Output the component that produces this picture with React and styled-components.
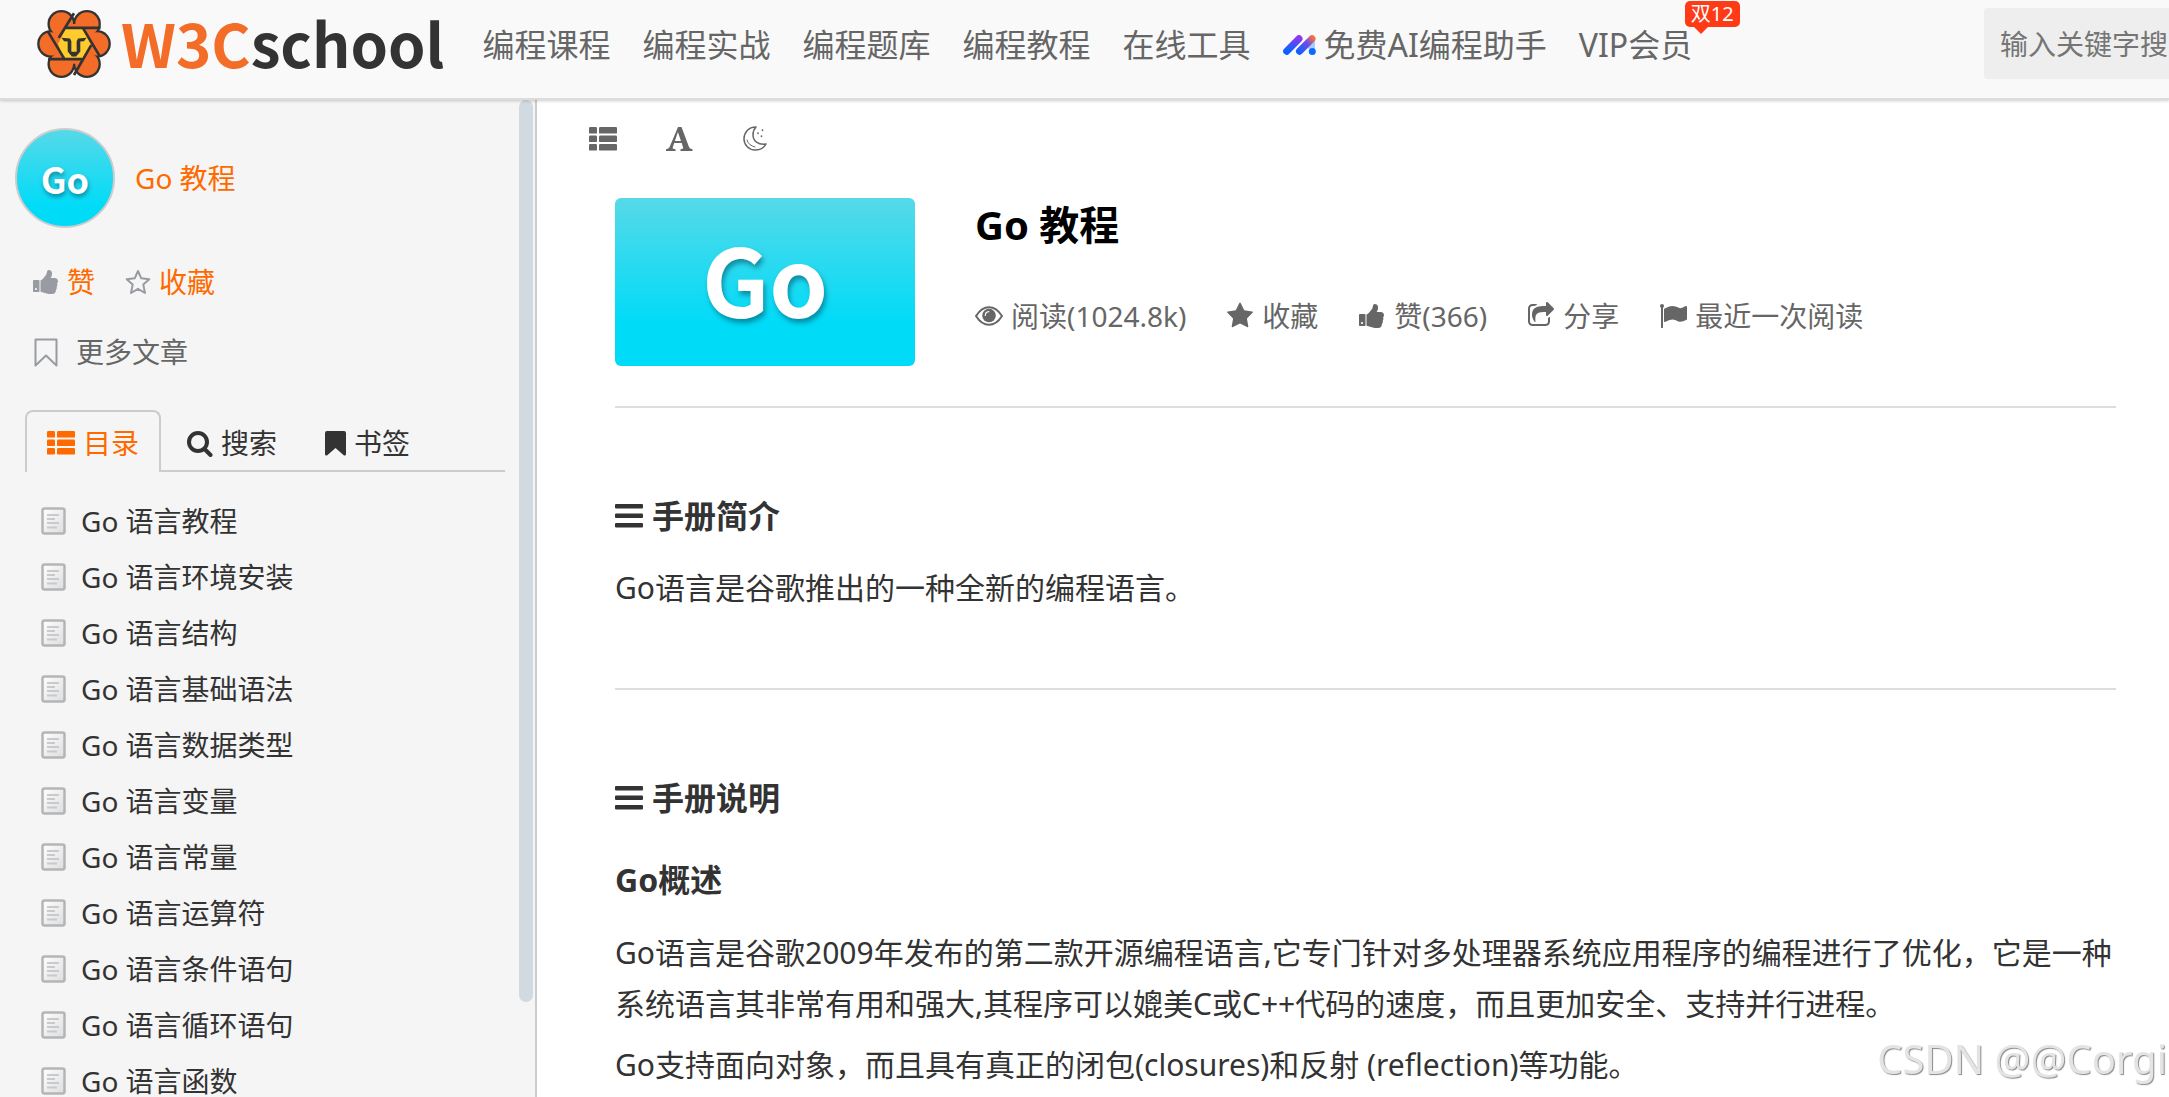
import React from "react";
import styled, { createGlobalStyle } from "styled-components";

const GlobalStyle = createGlobalStyle`
  * { box-sizing: border-box; }
  body {
    margin: 0;
    background: #fff;
    color: #333;
    font-family: "Noto Sans", "Noto Sans CJK SC", sans-serif;
    font-size: 28px;
    line-height: 40px;
  }
  a { color: inherit; text-decoration: none; }
  button {
    margin: 0;
    padding: 0;
    border: 0;
    background: none;
    color: inherit;
    font: inherit;
    cursor: pointer;
  }
  h1, h2, h3, p, ul { margin: 0; padding: 0; }
  svg { display: block; flex: none; }
`;

const Page = styled.div`
  display: flex;
  flex-direction: column;
  height: 100vh;
  overflow: hidden;
`;

/* ---------- header ---------- */

const Header = styled.header`
  position: relative;
  z-index: 2;
  display: flex;
  align-items: flex-start;
  flex: none;
  height: 100px;
  padding: 8px 0 0 37px;
  background: #f9f9f9;
  border-bottom: 2px solid #dcdcdc;
  box-shadow: 0 1px 3px rgba(0, 0, 0, 0.2);
`;

const Logo = styled.a`
  display: flex;
  align-items: center;
  gap: 10px;
  height: 72px;
  color: #333;
  font-family: "Noto Sans CJK SC", sans-serif;
  font-size: 60px;
  font-weight: 700;
  line-height: 68px;
`;

const LogoText = styled.span`
  padding-bottom: 4px;
`;

const LogoAccent = styled.span`
  color: #f36c28;
`;

const Nav = styled.nav`
  display: flex;
  align-items: center;
  gap: 32px;
  height: 74px;
  margin-left: 38px;
  color: #666;
  font-size: 32px;
  white-space: nowrap;
`;

const NavLink = styled.a`
  position: relative;
  display: flex;
  align-items: center;
  gap: 8px;
`;

const Badge = styled.span`
  position: absolute;
  left: 106px;
  top: -24px;
  padding: 0 6px;
  border-radius: 5px;
  background: #ff3a17;
  color: #fff;
  font-size: 20px;
  line-height: 26px;

  &::after {
    content: "";
    position: absolute;
    left: 9px;
    top: 26px;
    border: 7px solid transparent;
    border-top-color: #ff3a17;
    border-bottom: 0;
  }
`;

const SearchForm = styled.form`
  flex: none;
  width: 185px;
  margin-left: auto;
`;

const SearchInput = styled.input`
  display: block;
  width: 100%;
  height: 71px;
  padding: 0 0 0 16px;
  border: 0;
  border-radius: 4px 0 0 4px;
  background: #eee;
  color: #333;
  font: inherit;

  &::placeholder { color: #757575; opacity: 1; }
`;

/* ---------- sidebar ---------- */

const Body = styled.div`
  display: flex;
  flex: 1;
  min-height: 0;
`;

const Sidebar = styled.aside`
  display: flex;
  flex: none;
  width: 537px;
  padding-right: 2px;
  background: #f5f5f5;
  border-right: 2px solid #ccc;
  overflow: hidden;
`;

const SidebarContent = styled.div`
  flex: 1;
  padding: 28px 14px 0 15px;
`;

const ScrollThumb = styled.div`
  width: 14px;
  height: 902px;
  border-radius: 7px;
  background: #d1d9e1;
`;

const Course = styled.a`
  display: flex;
  align-items: center;
  gap: 20px;
  color: #ff6a00;
`;

const Avatar = styled.span`
  display: flex;
  align-items: center;
  justify-content: center;
  width: 100px;
  height: 100px;
  border: 2px solid #ccc;
  border-radius: 50%;
  background: linear-gradient(#56d9e8, #00dbf8 80%);
  color: #fff;
  font-family: "Noto Sans CJK SC", sans-serif;
  font-size: 36px;
  font-weight: 700;
  text-shadow: 1px 3px 4px rgba(0, 90, 110, 0.6);
`;

const Actions = styled.div`
  display: flex;
  gap: 30px;
  margin-top: 34px;
  padding-left: 17px;
`;

const Action = styled.button`
  display: flex;
  align-items: center;
  gap: ${(p) => p.$gap || 8}px;
  color: ${(p) => (p.$plain ? "#666" : "#ff6a00")};

  svg { color: #999ba3; }
`;

const MoreRow = styled.div`
  margin-top: 30px;
  padding-left: 19px;
`;

const Tabs = styled.div`
  display: flex;
  gap: 4px;
  height: 62px;
  margin: 38px 0 21px 10px;
  box-shadow: inset 0 -2px #ccc;
`;

const Tab = styled.button`
  display: flex;
  align-items: center;
  gap: 8px;
  padding: 2px 20px 0;
  border: 2px solid ${(p) => (p.$active ? "#ccc" : "transparent")};
  border-bottom: 0;
  border-radius: 8px 8px 0 0;
  background: ${(p) => (p.$active ? "#f5f5f5" : "none")};
  color: ${(p) => (p.$active ? "#ff6a00" : "#333")};
`;

const Chapters = styled.ul`
  padding-left: 26px;
  list-style: none;
`;

const Chapter = styled.a`
  display: flex;
  align-items: center;
  gap: 14px;
  height: 56px;
  line-height: 28px;
  white-space: nowrap;
`;

/* ---------- main ---------- */

const Main = styled.main`
  flex: 1;
  min-width: 0;
  padding: 26px 53px 0 78px;
  overflow: hidden;
`;

const Toolbar = styled.div`
  display: flex;
  align-items: center;
  gap: 49px;
  height: 25px;
  margin-left: -26px;
  color: #666;
`;

const Intro = styled.section`
  display: flex;
  gap: 60px;
  padding: 47px 0 40px;
  border-bottom: 2px solid #ddd;
`;

const Cover = styled.div`
  display: flex;
  align-items: center;
  justify-content: center;
  flex: none;
  width: 300px;
  height: 168px;
  padding-bottom: 10px;
  border-radius: 6px;
  background: linear-gradient(#56d9e8, #00dbf8 75%);
  color: #fff;
  font-family: "Noto Sans CJK SC", sans-serif;
  font-size: 94px;
  font-weight: 700;
  line-height: 140px;
  text-shadow: 2px 4px 5px rgba(0, 90, 110, 0.6);
`;

const Title = styled.h1`
  color: #000;
  font-size: 40px;
  line-height: 54px;
`;

const Meta = styled.div`
  display: flex;
  gap: 40px;
  margin-top: 44px;
  color: #666;
  white-space: nowrap;
`;

const MetaItem = styled.button`
  display: flex;
  align-items: center;
  gap: 8px;
`;

const Section = styled.section`
  padding: 84px 0 75px;
  border-bottom: 2px solid #ddd;
`;

const Heading = styled.h2`
  display: flex;
  align-items: center;
  gap: 9px;
  font-size: 32px;
  line-height: 48px;
`;

const SubHeading = styled.h3`
  margin: 34px 0 23px;
  font-size: 32px;
  line-height: 48px;
`;

const Paragraph = styled.p`
  margin-top: 10px;
  font-size: 30px;
  line-height: 51px;
`;

const FirstParagraph = styled(Paragraph)`
  margin-top: 22px;
`;

const Watermark = styled.div`
  position: fixed;
  right: 2px;
  bottom: 14px;
  color: #e4e4e4;
  font-size: 40px;
  line-height: 48px;
  text-shadow: 1px 1px 1px #888;
`;

/* ---------- icons ---------- */

const Glyph = ({ d, size = 28 }) => (
  <svg width={size} height={size} viewBox="0 0 1792 1792" fill="currentColor" aria-hidden="true">
    <path d={d} />
  </svg>
);

const THUMB =
  "M320 1344q0-26-19-45t-45-19q-27 0-45.5 19t-18.5 45q0 27 18.5 45.5t45.5 18.5q26 0 45-18.5t19-45.5zm160-512v640q0 26-19 45t-45 19h-288q-26 0-45-19t-19-45v-640q0-26 19-45t45-19h288q26 0 45 19t19 45zm1184 0q0 86-55 149 15 44 15 76 3 76-43 137 17 56 0 117-15 57-54 94 9 112-49 181-64 76-197 78h-129q-66 0-144-15.500t-121.500-29-120.500-39.500q-123-43-158-44-26-1-45-19.500t-19-44.500v-641q0-25 18-43.500t43-20.500q24-2 76-59t101-121q68-87 101-120 18-18 31-48t17.500-48.500 13.500-60.500q7-39 12.500-61t19.500-52 34-50q19-19 45-19 46 0 82.500 10.500t60 26 40 40.500 24 45 12 50 5 45 .5 39q0 38-9.500 76t-19 60-27.500 56q-3 6-10 18t-11 22-8 24h277q78 0 135 57t57 135z";
const STAR =
  "M1728 647q0 22-26 48l-363 354 86 500q1 7 1 20 0 21-10.500 35.500t-30.500 14.500q-19 0-40-12l-449-236-449 236q-22 12-40 12-21 0-31.500-14.500t-10.500-35.500q0-6 2-20l86-500-364-354q-25-27-25-48 0-37 56-46l502-73 225-455q19-41 49-41t49 41l225 455 502 73q56 9 56 46z";
const FLAG =
  "M320 256q0 72-64 110v1266q0 13-9.500 22.500t-22.500 9.500h-64q-13 0-22.500-9.500t-9.500-22.500v-1266q-64-38-64-110 0-53 37.500-90.500t90.500-37.500 90.500 37.500 37.500 90.500zm1472 64v763q0 25-12.500 38.500t-39.500 27.500q-215 116-369 116-61 0-123.500-22t-108.500-48-115.500-48-142.500-22q-192 0-464 146-17 9-33 9-26 0-45-19t-19-45v-742q0-32 31-55 21-14 79-43 236-120 421-120 107 0 200 29t219 88q38 19 88 19 54 0 117.500-21t110-47 88-47 54.500-21q26 0 45 19t19 45z";
const SHARE =
  "M1472 989v259q0 119-84.500 203.500t-203.500 84.500h-832q-119 0-203.500-84.500t-84.500-203.500v-832q0-119 84.500-203.500t203.500-84.500h255q13 0 22.500 9.500t9.500 22.500q0 27-26 32-77 26-133 60-10 4-16 4h-112q-66 0-113 47t-47 113v832q0 66 47 113t113 47h832q66 0 113-47t47-113v-214q0-19 18-29 28-13 54-37 16-16 35-8 21 9 21 29zm237-496l-384 384q-18 19-45 19-12 0-25-5-39-17-39-59v-192h-160q-323 0-438 131-119 137-74 473 3 23-20 34-8 2-12 2-16 0-26-13-10-14-21-31t-39.500-68.500-49.500-99.500-38.500-114-17.500-122q0-49 3.500-91t14-90 28-88 47-81.500 68.500-74 94.500-61.500 124.500-48.500 159.500-30.500 196.500-11h160v-192q0-42 39-59 13-5 25-5 26 0 45 19l384 384q19 19 19 45t-19 45z";

const ListIcon = ({ size = 28 }) => (
  <svg width={size} height={(size * 24) / 28} viewBox="0 0 28 24" fill="currentColor" aria-hidden="true">
    {[0, 8.5, 17].map((y) => (
      <g key={y}>
        <rect y={y} width="8" height="6.600" rx="1.200" />
        <rect x="10" y={y} width="18" height="6.600" rx="1.200" />
      </g>
    ))}
  </svg>
);

const PETALS = [[94, 66], [171, 66], [201, 126], [171, 187], [94, 187], [63, 126]];

const LionIcon = () => (
  <svg width="74" height="68" viewBox="21 24 222 205" aria-hidden="true">
    <g fill="#333">
      {PETALS.map(([x, y]) => (
        <circle key={`${x}-${y}`} cx={x} cy={y} r="42" />
      ))}
    </g>
    <g fill="#f36c28">
      {PETALS.map(([x, y]) => (
        <circle key={`${x}-${y}`} cx={x} cy={y} r="35" />
      ))}
      <path d="M98 66h70l30 60-30 60H98L66 126z" />
    </g>
    <path d="M108 80h50l24 48-25 44h-56L84 126z" fill="#ffcb2d" />
    <path d="M132 34L86 108M106 78h106M160 80l50 84M184 130l-52 90M54 172h102M54 90l48 80" fill="none" stroke="#333" strokeWidth="8" />
    <path d="M94 108l26 2 4 8v32h16v-32l4-8 26-2-8 10-11 1v30l-8 10-11 6-11-6-8-10v-30l-11-1zM118 152h28l-7 12h-14z" fill="#333" />
  </svg>
);

const AiIcon = () => (
  <svg width="33" height="20" viewBox="0 0 33 20" aria-hidden="true">
    <defs>
      <linearGradient id="aiStroke" x1="0" y1="1" x2="0" y2="0">
        <stop offset="0" stopColor="#0a62ff" />
        <stop offset=".5" stopColor="#4052fb" />
        <stop offset="1" stopColor="#8a38ee" />
      </linearGradient>
      <linearGradient id="aiWarm" gradientUnits="userSpaceOnUse" x1="16" y1="17" x2="30" y2="3">
        <stop offset="0" stopColor="#1460ff" />
        <stop offset=".6" stopColor="#6b4de8" />
        <stop offset="1" stopColor="#f0704a" />
      </linearGradient>
    </defs>
    <path d="M32 4v12l-8-3z" fill="#a9ccff" />
    <path d="M3.700 16.300L16 3.700" stroke="url(#aiStroke)" strokeWidth="7" strokeLinecap="round" />
    <path d="M16.500 16.300L29 3.700" stroke="url(#aiWarm)" strokeWidth="7" strokeLinecap="round" />
    <circle cx="29.300" cy="16.500" r="3.500" fill="#0a6cff" />
  </svg>
);

const BookmarkOutline = () => (
  <svg width="24" height="29" viewBox="0 0 24 29" fill="none" stroke="currentColor" strokeWidth="2" strokeLinejoin="round" aria-hidden="true">
    <path d="M1.500 1.500h21v26L12 17.500 1.500 27.500z" />
  </svg>
);

const BookmarkSolid = () => (
  <svg width="21" height="25" viewBox="0 0 21 25" fill="currentColor" aria-hidden="true">
    <path d="M2 0h17q2 0 2 2v21q0 2-2 1.500L10.500 17 2 24.500Q0 25 0 23V2q0-2 2-2z" />
  </svg>
);

const StarOutline = () => (
  <svg width="26" height="26" viewBox="0 0 26 26" fill="none" stroke="currentColor" strokeWidth="2" strokeLinejoin="round" aria-hidden="true">
    <path d="M13 2l3.300 7.300 8 .9-6 5.400 1.700 8.400-7-4.200L6 24l1.700-8.400-6-5.400 8-.9z" />
  </svg>
);

const SearchIcon = () => (
  <svg width="26" height="27" viewBox="0 0 26 27" fill="none" stroke="currentColor" strokeWidth="4" strokeLinecap="round" aria-hidden="true">
    <circle cx="11" cy="12" r="9" />
    <path d="M17.500 19l6 6" />
  </svg>
);

const PageIcon = () => (
  <svg width="26" height="28" viewBox="0 0 26 28" aria-hidden="true">
    <defs>
      <linearGradient id="sheet" x1="0" y1="0" x2="1" y2="1">
        <stop offset="0" stopColor="#fff" />
        <stop offset="1" stopColor="#dcdddf" />
      </linearGradient>
    </defs>
    <rect x="1.500" y="1.500" width="22" height="25" rx="2" fill="url(#sheet)" stroke="#b4b5b7" strokeWidth="2.500" />
    <path d="M6 8h12M6 12h8M6 16h12M6 20.500h10" stroke="#cacaca" strokeWidth="2" />
  </svg>
);

const FontIcon = () => (
  <svg width="28" height="24" viewBox="0 0 28 24" fill="currentColor" aria-hidden="true">
    <path d="M12 0h3.500l7.500 20q.5 2 3.500 2.200V24H14.500v-1.800q3-.2 2.600-1.700L15.700 16H8.200l-1.500 4.500q-.3 1.500 2.800 1.700V24H0v-1.800q2.800-.3 3.600-2.200zM8.900 14h6.100L11.900 5z" />
  </svg>
);

const MoonIcon = () => (
  <svg width="24" height="25" viewBox="0 0 24 25" fill="none" stroke="currentColor" strokeWidth="1.500" strokeLinecap="round" strokeLinejoin="round" aria-hidden="true">
    <path d="M13 1C5 1 1 7 1 13c0 6 5 11 11 11 5 0 9-2 11-6-8 1-13-3-13-9 0-3 1-6 3-8z" />
    <path d="M4 14c1 4 4 6 8 7" strokeWidth="1" />
    <path d="M15 7v.3M19.500 4v.3M18.500 10v.3" strokeWidth="1.700" />
  </svg>
);

const EyeIcon = () => (
  <svg width="28" height="20" viewBox="0 0 28 20" fill="none" aria-hidden="true">
    <path d="M1 10Q6.500 1.200 14 1.200T27 10q-5.500 8.800-13 8.800T1 10z" stroke="currentColor" strokeWidth="2" />
    <circle cx="14" cy="9.500" r="6.800" fill="currentColor" />
    <path d="M10.300 9.500q0-3.500 3.500-3.900" stroke="#fff" strokeWidth="1.200" strokeLinecap="round" />
  </svg>
);

const BarsIcon = () => (
  <svg width="28" height="24" viewBox="0 0 28 24" fill="currentColor" aria-hidden="true">
    <rect y="0" width="28" height="4.500" rx="1" />
    <rect y="9.500" width="28" height="4.500" rx="1" />
    <rect y="19" width="28" height="4.500" rx="1" />
  </svg>
);

/* ---------- data ---------- */

const NAV = ["编程课程", "编程实战", "编程题库", "编程教程", "在线工具"];

const CHAPTERS = [
  "Go 语言教程",
  "Go 语言环境安装",
  "Go 语言结构",
  "Go 语言基础语法",
  "Go 语言数据类型",
  "Go 语言变量",
  "Go 语言常量",
  "Go 语言运算符",
  "Go 语言条件语句",
  "Go 语言循环语句",
  "Go 语言函数",
];

const TABS = [
  { label: "目录", icon: <ListIcon /> },
  { label: "搜索", icon: <SearchIcon /> },
  { label: "书签", icon: <BookmarkSolid /> },
];

const META = [
  { label: "阅读(1024.8k)", icon: <EyeIcon /> },
  { label: "收藏", icon: <Glyph d={STAR} /> },
  { label: "赞(366)", icon: <Glyph d={THUMB} /> },
  { label: "分享", icon: <Glyph d={SHARE} /> },
  { label: "最近一次阅读", icon: <Glyph d={FLAG} /> },
];

export default function App() {
  return (
    <Page lang="zh-CN">
      <GlobalStyle />
      <Header>
        <Logo href="#">
          <LionIcon />
          <LogoText>
            <LogoAccent>W3C</LogoAccent>school
          </LogoText>
        </Logo>
        <Nav>
          {NAV.map((label) => (
            <NavLink key={label} href="#">{label}</NavLink>
          ))}
          <NavLink href="#">
            <AiIcon />
            免费AI编程助手
          </NavLink>
          <NavLink href="#">
            VIP会员
            <Badge>双12</Badge>
          </NavLink>
        </Nav>
        <SearchForm role="search">
          <SearchInput type="text" aria-label="搜索" placeholder="输入关键字搜" />
        </SearchForm>
      </Header>

      <Body>
        <Sidebar>
          <SidebarContent>
            <Course href="#">
              <Avatar>Go</Avatar>
              Go 教程
            </Course>
            <Actions>
              <Action $gap={7}><Glyph d={THUMB} />赞</Action>
              <Action><StarOutline />收藏</Action>
            </Actions>
            <MoreRow>
              <Action $plain $gap={18}><BookmarkOutline />更多文章</Action>
            </MoreRow>
            <Tabs role="tablist">
              {TABS.map((tab, i) => (
                <Tab key={tab.label} role="tab" aria-selected={i === 0} $active={i === 0}>
                  {tab.icon}
                  {tab.label}
                </Tab>
              ))}
            </Tabs>
            <Chapters>
              {CHAPTERS.map((label) => (
                <li key={label}>
                  <Chapter href="#"><PageIcon />{label}</Chapter>
                </li>
              ))}
            </Chapters>
          </SidebarContent>
          <ScrollThumb />
        </Sidebar>

        <Main>
          <Toolbar>
            <button aria-label="目录"><ListIcon /></button>
            <button aria-label="字体"><FontIcon /></button>
            <button aria-label="夜间模式"><MoonIcon /></button>
          </Toolbar>
          <Intro>
            <Cover>Go</Cover>
            <div>
              <Title>Go 教程</Title>
              <Meta>
                {META.map((item) => (
                  <MetaItem key={item.label}>
                    {item.icon}
                    {item.label}
                  </MetaItem>
                ))}
              </Meta>
            </div>
          </Intro>
          <Section>
            <Heading><BarsIcon />手册简介</Heading>
            <FirstParagraph>Go语言是谷歌推出的一种全新的编程语言。</FirstParagraph>
          </Section>
          <Section>
            <Heading><BarsIcon />手册说明</Heading>
            <SubHeading>Go概述</SubHeading>
            <Paragraph>
              Go语言是谷歌2009年发布的第二款开源编程语言,它专门针对多处理器系统应用程序的编程进行了优化，它是一种系统语言其非常有用和强大,其程序可以媲美C或C++代码的速度，而且更加安全、支持并行进程。
            </Paragraph>
            <Paragraph>
              Go支持面向对象，而且具有真正的闭包(closures)和反射 (reflection)等功能。
            </Paragraph>
          </Section>
        </Main>
      </Body>
      <Watermark>CSDN @@Corgi</Watermark>
    </Page>
  );
}
